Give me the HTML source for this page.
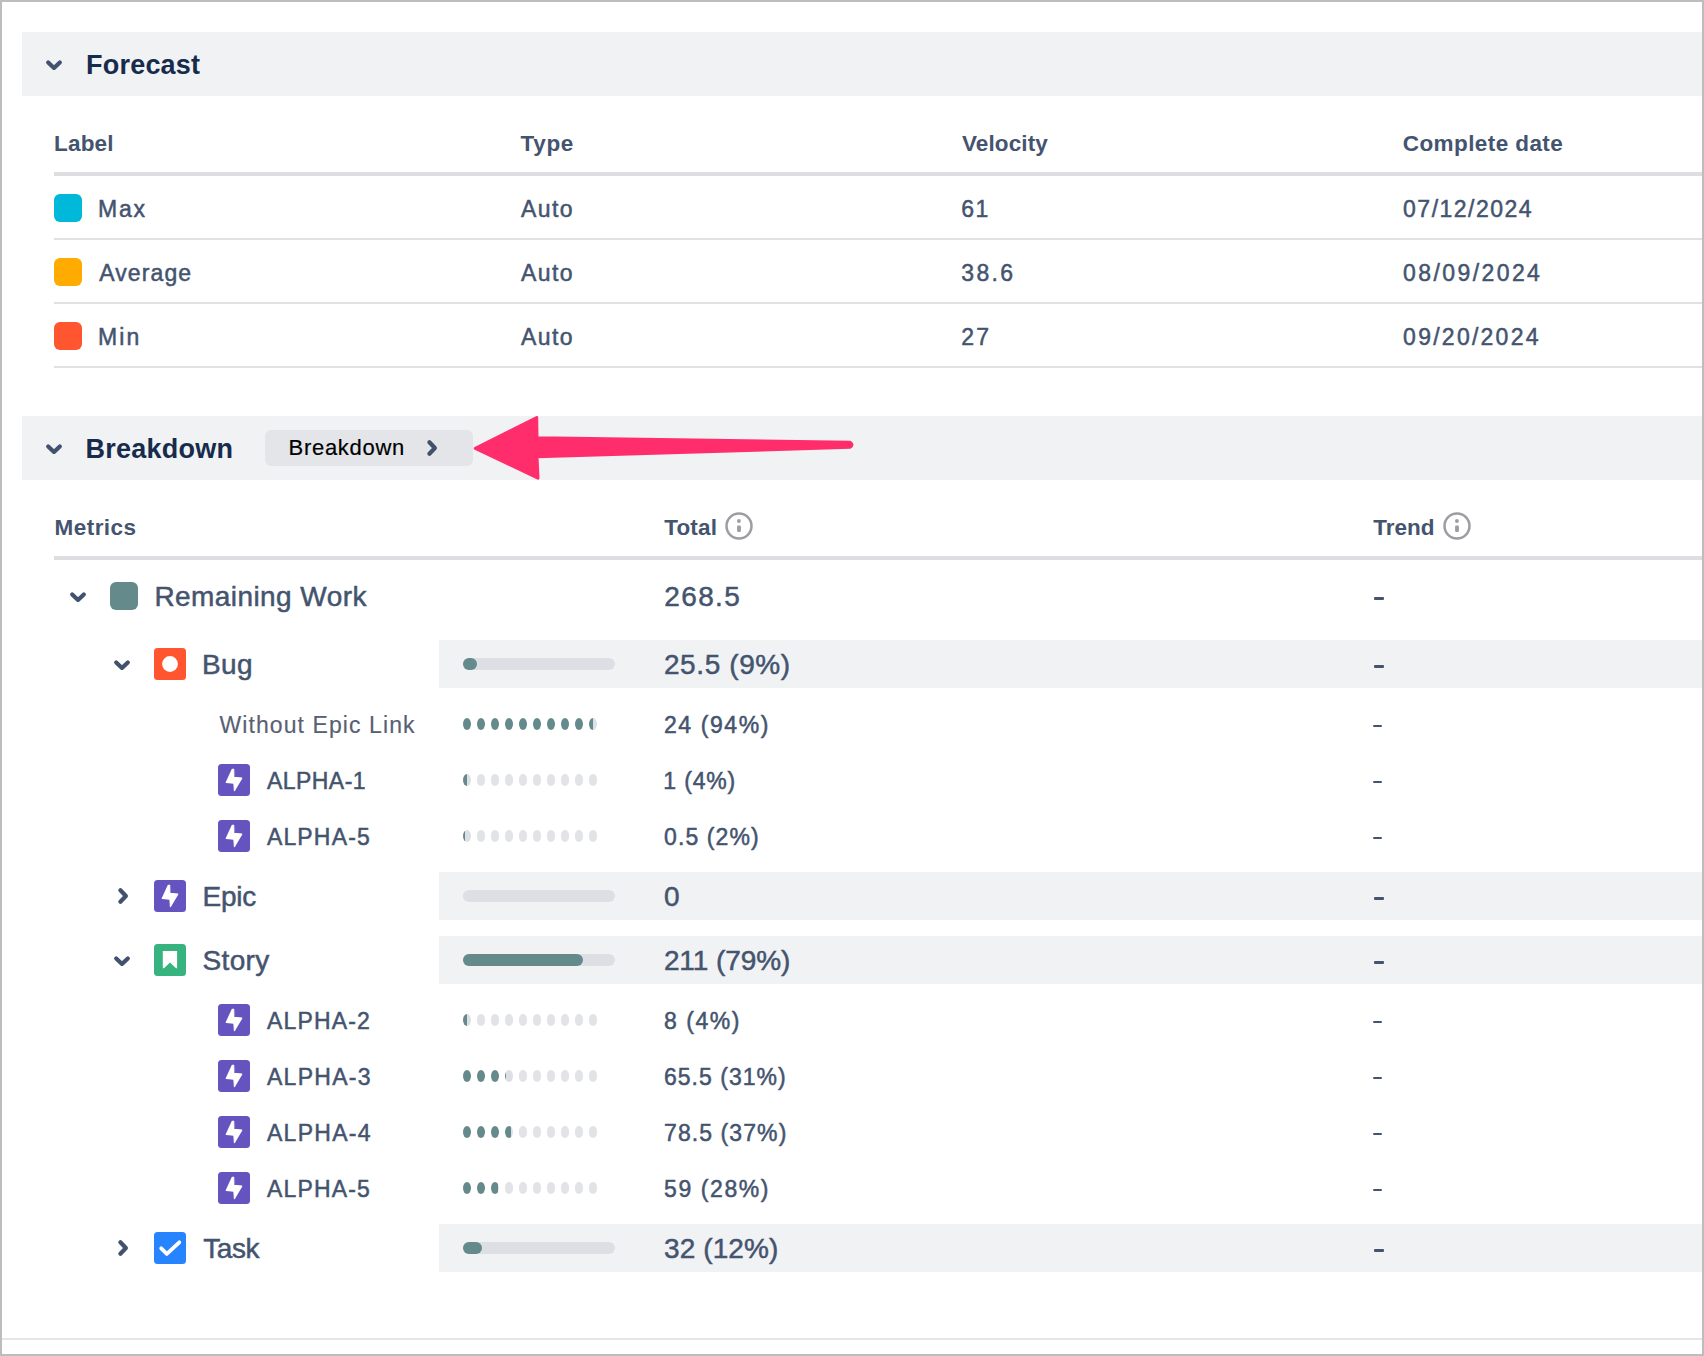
<!DOCTYPE html>
<html><head><meta charset="utf-8"><style>
html,body{margin:0;padding:0;}
body{width:1704px;height:1356px;position:relative;overflow:hidden;background:#fff;font-family:"Liberation Sans",sans-serif;}
#frame{position:absolute;left:0;top:0;width:1700px;height:1352px;border:2px solid #bdbdbd;}
div{position:absolute;}
.t{white-space:nowrap;}
</style></head><body>
<div style="left:22px;top:32px;width:1682px;height:64px;background:#f1f2f4;border-radius:0px;"></div>
<svg style="position:absolute;left:44px;top:57px" width="20" height="16" viewBox="0 0 20 16"><polyline points="4.2,5.4 10,10.9 15.8,5.4" fill="none" stroke="#42526e" stroke-width="4.2" stroke-linecap="round" stroke-linejoin="round"/></svg>
<div style="left:54px;top:172px;width:1650px;height:4px;background:#dcdee2;border-radius:0px;"></div>
<div style="left:54px;top:194px;width:28px;height:28px;background:#00b8d9;border-radius:6px;"></div>
<div style="left:54px;top:238px;width:1650px;height:2px;background:#dfe1e5;border-radius:0px;"></div>
<div style="left:54px;top:258px;width:28px;height:28px;background:#ffab00;border-radius:6px;"></div>
<div style="left:54px;top:302px;width:1650px;height:2px;background:#dfe1e5;border-radius:0px;"></div>
<div style="left:54px;top:322px;width:28px;height:28px;background:#ff5630;border-radius:6px;"></div>
<div style="left:54px;top:366px;width:1650px;height:2px;background:#dfe1e5;border-radius:0px;"></div>
<div style="left:22px;top:416px;width:1682px;height:64px;background:#f1f2f4;border-radius:0px;"></div>
<svg style="position:absolute;left:44px;top:441px" width="20" height="16" viewBox="0 0 20 16"><polyline points="4.2,5.4 10,10.9 15.8,5.4" fill="none" stroke="#42526e" stroke-width="4.2" stroke-linecap="round" stroke-linejoin="round"/></svg>
<div style="left:265px;top:430px;width:208px;height:36px;background:#e3e5e9;border-radius:6px;"></div>
<svg style="position:absolute;left:424px;top:438px" width="16" height="20" viewBox="0 0 16 20"><polyline points="5.4,4.2 10.9,10 5.4,15.8" fill="none" stroke="#42526e" stroke-width="4.2" stroke-linecap="round" stroke-linejoin="round"/></svg>
<svg style="position:absolute;left:462px;top:400px" width="420" height="100" viewBox="0 0 420 100"><path d="M13.3 48.3 L76 78.1 L75 56.8 L388 47.3 Q392 44.75 388 42.2 L75 37.8 L74.7 17.5 Z" fill="#ff2d6b" stroke="#ff2d6b" stroke-width="3" stroke-linejoin="round"/></svg>
<svg style="position:absolute;left:724px;top:511px" width="30" height="30" viewBox="0 0 30 30"><circle cx="15" cy="15" r="12.5" fill="none" stroke="#9c9da3" stroke-width="2.5"/><circle cx="14.9" cy="10" r="1.9" fill="#9c9da3"/><rect x="13.1" y="14.5" width="3.8" height="6.4" rx="1.2" fill="#9c9da3"/></svg>
<svg style="position:absolute;left:1442px;top:511px" width="30" height="30" viewBox="0 0 30 30"><circle cx="15" cy="15" r="12.5" fill="none" stroke="#9c9da3" stroke-width="2.5"/><circle cx="14.9" cy="10" r="1.9" fill="#9c9da3"/><rect x="13.1" y="14.5" width="3.8" height="6.4" rx="1.2" fill="#9c9da3"/></svg>
<div style="left:54px;top:556px;width:1650px;height:4px;background:#dcdee2;border-radius:0px;"></div>
<svg style="position:absolute;left:68px;top:589px" width="20" height="16" viewBox="0 0 20 16"><polyline points="4.2,5.4 10,10.9 15.8,5.4" fill="none" stroke="#42526e" stroke-width="4.2" stroke-linecap="round" stroke-linejoin="round"/></svg>
<div style="left:110px;top:582px;width:28px;height:28px;background:#648a8c;border-radius:6px;"></div>
<div style="left:1374px;top:597px;width:10px;height:3px;background:#44546f;border-radius:1px;"></div>
<div style="left:439px;top:640px;width:1265px;height:48px;background:#f1f2f4;border-radius:0px;"></div>
<svg style="position:absolute;left:112px;top:657px" width="20" height="16" viewBox="0 0 20 16"><polyline points="4.2,5.4 10,10.9 15.8,5.4" fill="none" stroke="#42526e" stroke-width="4.2" stroke-linecap="round" stroke-linejoin="round"/></svg>
<svg style="position:absolute;left:154px;top:648px" width="32" height="32" viewBox="0 0 32 32"><rect width="32" height="32" rx="3.5" fill="#ff5630"/><circle cx="16" cy="16" r="7.9" fill="#fff"/></svg>
<div style="left:463px;top:658px;width:152px;height:12px;background:#dcdfe4;border-radius:6px;"></div>
<div style="left:463px;top:658px;width:14px;height:12px;background:#648a8c;border-radius:6px;"></div>
<div style="left:1374px;top:665px;width:10px;height:3px;background:#44546f;border-radius:1px;"></div>
<div style="left:463px;top:718px;width:8px;height:12px;background:#648a8c;border-radius:4px/6px;"></div>
<div style="left:477px;top:718px;width:8px;height:12px;background:#648a8c;border-radius:4px/6px;"></div>
<div style="left:491px;top:718px;width:8px;height:12px;background:#648a8c;border-radius:4px/6px;"></div>
<div style="left:505px;top:718px;width:8px;height:12px;background:#648a8c;border-radius:4px/6px;"></div>
<div style="left:519px;top:718px;width:8px;height:12px;background:#648a8c;border-radius:4px/6px;"></div>
<div style="left:533px;top:718px;width:8px;height:12px;background:#648a8c;border-radius:4px/6px;"></div>
<div style="left:547px;top:718px;width:8px;height:12px;background:#648a8c;border-radius:4px/6px;"></div>
<div style="left:561px;top:718px;width:8px;height:12px;background:#648a8c;border-radius:4px/6px;"></div>
<div style="left:575px;top:718px;width:8px;height:12px;background:#648a8c;border-radius:4px/6px;"></div>
<div style="left:589px;top:718px;width:8px;height:12px;border-radius:4px/6px;background:linear-gradient(90deg,#648a8c 50%,#dcdfe4 50%)"></div>
<div style="left:1373px;top:725px;width:9px;height:2px;background:#44546f;border-radius:1px;"></div>
<svg style="position:absolute;left:218px;top:764px" width="32" height="32" viewBox="0 0 32 32"><rect width="32" height="32" rx="3.5" fill="#6554c0"/><path d="M14.3 5.2 L15.7 5.2 L15.9 13.4 L23.8 14.1 L16.4 26.6 L15.9 19.2 L8.2 18.4 Z" fill="#fff" stroke="#fff" stroke-width="1.1" stroke-linejoin="round"/></svg>
<div style="left:463px;top:774px;width:8px;height:12px;border-radius:4px/6px;background:linear-gradient(90deg,#648a8c 50%,#dcdfe4 50%)"></div>
<div style="left:477px;top:774px;width:8px;height:12px;background:#e1e3e6;border-radius:4px/5px;"></div>
<div style="left:491px;top:774px;width:8px;height:12px;background:#e1e3e6;border-radius:4px/5px;"></div>
<div style="left:505px;top:774px;width:8px;height:12px;background:#e1e3e6;border-radius:4px/5px;"></div>
<div style="left:519px;top:774px;width:8px;height:12px;background:#e1e3e6;border-radius:4px/5px;"></div>
<div style="left:533px;top:774px;width:8px;height:12px;background:#e1e3e6;border-radius:4px/5px;"></div>
<div style="left:547px;top:774px;width:8px;height:12px;background:#e1e3e6;border-radius:4px/5px;"></div>
<div style="left:561px;top:774px;width:8px;height:12px;background:#e1e3e6;border-radius:4px/5px;"></div>
<div style="left:575px;top:774px;width:8px;height:12px;background:#e1e3e6;border-radius:4px/5px;"></div>
<div style="left:589px;top:774px;width:8px;height:12px;background:#e1e3e6;border-radius:4px/5px;"></div>
<div style="left:1373px;top:781px;width:9px;height:2px;background:#44546f;border-radius:1px;"></div>
<svg style="position:absolute;left:218px;top:820px" width="32" height="32" viewBox="0 0 32 32"><rect width="32" height="32" rx="3.5" fill="#6554c0"/><path d="M14.3 5.2 L15.7 5.2 L15.9 13.4 L23.8 14.1 L16.4 26.6 L15.9 19.2 L8.2 18.4 Z" fill="#fff" stroke="#fff" stroke-width="1.1" stroke-linejoin="round"/></svg>
<div style="left:463px;top:830px;width:8px;height:12px;border-radius:4px/6px;background:linear-gradient(90deg,#648a8c 25%,#dcdfe4 25%)"></div>
<div style="left:477px;top:830px;width:8px;height:12px;background:#e1e3e6;border-radius:4px/5px;"></div>
<div style="left:491px;top:830px;width:8px;height:12px;background:#e1e3e6;border-radius:4px/5px;"></div>
<div style="left:505px;top:830px;width:8px;height:12px;background:#e1e3e6;border-radius:4px/5px;"></div>
<div style="left:519px;top:830px;width:8px;height:12px;background:#e1e3e6;border-radius:4px/5px;"></div>
<div style="left:533px;top:830px;width:8px;height:12px;background:#e1e3e6;border-radius:4px/5px;"></div>
<div style="left:547px;top:830px;width:8px;height:12px;background:#e1e3e6;border-radius:4px/5px;"></div>
<div style="left:561px;top:830px;width:8px;height:12px;background:#e1e3e6;border-radius:4px/5px;"></div>
<div style="left:575px;top:830px;width:8px;height:12px;background:#e1e3e6;border-radius:4px/5px;"></div>
<div style="left:589px;top:830px;width:8px;height:12px;background:#e1e3e6;border-radius:4px/5px;"></div>
<div style="left:1373px;top:837px;width:9px;height:2px;background:#44546f;border-radius:1px;"></div>
<div style="left:439px;top:872px;width:1265px;height:48px;background:#f1f2f4;border-radius:0px;"></div>
<svg style="position:absolute;left:115px;top:886px" width="16" height="20" viewBox="0 0 16 20"><polyline points="5.4,4.2 10.9,10 5.4,15.8" fill="none" stroke="#42526e" stroke-width="4.2" stroke-linecap="round" stroke-linejoin="round"/></svg>
<svg style="position:absolute;left:154px;top:880px" width="32" height="32" viewBox="0 0 32 32"><rect width="32" height="32" rx="3.5" fill="#6554c0"/><path d="M14.3 5.2 L15.7 5.2 L15.9 13.4 L23.8 14.1 L16.4 26.6 L15.9 19.2 L8.2 18.4 Z" fill="#fff" stroke="#fff" stroke-width="1.1" stroke-linejoin="round"/></svg>
<div style="left:463px;top:890px;width:152px;height:12px;background:#dcdfe4;border-radius:6px;"></div>
<div style="left:1374px;top:897px;width:10px;height:3px;background:#44546f;border-radius:1px;"></div>
<div style="left:439px;top:936px;width:1265px;height:48px;background:#f1f2f4;border-radius:0px;"></div>
<svg style="position:absolute;left:112px;top:953px" width="20" height="16" viewBox="0 0 20 16"><polyline points="4.2,5.4 10,10.9 15.8,5.4" fill="none" stroke="#42526e" stroke-width="4.2" stroke-linecap="round" stroke-linejoin="round"/></svg>
<svg style="position:absolute;left:154px;top:944px" width="32" height="32" viewBox="0 0 32 32"><rect width="32" height="32" rx="3.5" fill="#36b37e"/><path d="M8.8 7 H23.1 V24.2 H22 L16 18.5 L10 24.2 H8.8 Z" fill="#fff"/></svg>
<div style="left:463px;top:954px;width:152px;height:12px;background:#dcdfe4;border-radius:6px;"></div>
<div style="left:463px;top:954px;width:120px;height:12px;background:#648a8c;border-radius:6px;"></div>
<div style="left:1374px;top:961px;width:10px;height:3px;background:#44546f;border-radius:1px;"></div>
<svg style="position:absolute;left:218px;top:1004px" width="32" height="32" viewBox="0 0 32 32"><rect width="32" height="32" rx="3.5" fill="#6554c0"/><path d="M14.3 5.2 L15.7 5.2 L15.9 13.4 L23.8 14.1 L16.4 26.6 L15.9 19.2 L8.2 18.4 Z" fill="#fff" stroke="#fff" stroke-width="1.1" stroke-linejoin="round"/></svg>
<div style="left:463px;top:1014px;width:8px;height:12px;border-radius:4px/6px;background:linear-gradient(90deg,#648a8c 50%,#dcdfe4 50%)"></div>
<div style="left:477px;top:1014px;width:8px;height:12px;background:#e1e3e6;border-radius:4px/5px;"></div>
<div style="left:491px;top:1014px;width:8px;height:12px;background:#e1e3e6;border-radius:4px/5px;"></div>
<div style="left:505px;top:1014px;width:8px;height:12px;background:#e1e3e6;border-radius:4px/5px;"></div>
<div style="left:519px;top:1014px;width:8px;height:12px;background:#e1e3e6;border-radius:4px/5px;"></div>
<div style="left:533px;top:1014px;width:8px;height:12px;background:#e1e3e6;border-radius:4px/5px;"></div>
<div style="left:547px;top:1014px;width:8px;height:12px;background:#e1e3e6;border-radius:4px/5px;"></div>
<div style="left:561px;top:1014px;width:8px;height:12px;background:#e1e3e6;border-radius:4px/5px;"></div>
<div style="left:575px;top:1014px;width:8px;height:12px;background:#e1e3e6;border-radius:4px/5px;"></div>
<div style="left:589px;top:1014px;width:8px;height:12px;background:#e1e3e6;border-radius:4px/5px;"></div>
<div style="left:1373px;top:1021px;width:9px;height:2px;background:#44546f;border-radius:1px;"></div>
<svg style="position:absolute;left:218px;top:1060px" width="32" height="32" viewBox="0 0 32 32"><rect width="32" height="32" rx="3.5" fill="#6554c0"/><path d="M14.3 5.2 L15.7 5.2 L15.9 13.4 L23.8 14.1 L16.4 26.6 L15.9 19.2 L8.2 18.4 Z" fill="#fff" stroke="#fff" stroke-width="1.1" stroke-linejoin="round"/></svg>
<div style="left:463px;top:1070px;width:8px;height:12px;background:#648a8c;border-radius:4px/6px;"></div>
<div style="left:477px;top:1070px;width:8px;height:12px;background:#648a8c;border-radius:4px/6px;"></div>
<div style="left:491px;top:1070px;width:8px;height:12px;background:#648a8c;border-radius:4px/6px;"></div>
<div style="left:505px;top:1070px;width:8px;height:12px;border-radius:4px/6px;background:linear-gradient(90deg,#648a8c 12%,#dcdfe4 12%)"></div>
<div style="left:519px;top:1070px;width:8px;height:12px;background:#e1e3e6;border-radius:4px/5px;"></div>
<div style="left:533px;top:1070px;width:8px;height:12px;background:#e1e3e6;border-radius:4px/5px;"></div>
<div style="left:547px;top:1070px;width:8px;height:12px;background:#e1e3e6;border-radius:4px/5px;"></div>
<div style="left:561px;top:1070px;width:8px;height:12px;background:#e1e3e6;border-radius:4px/5px;"></div>
<div style="left:575px;top:1070px;width:8px;height:12px;background:#e1e3e6;border-radius:4px/5px;"></div>
<div style="left:589px;top:1070px;width:8px;height:12px;background:#e1e3e6;border-radius:4px/5px;"></div>
<div style="left:1373px;top:1077px;width:9px;height:2px;background:#44546f;border-radius:1px;"></div>
<svg style="position:absolute;left:218px;top:1116px" width="32" height="32" viewBox="0 0 32 32"><rect width="32" height="32" rx="3.5" fill="#6554c0"/><path d="M14.3 5.2 L15.7 5.2 L15.9 13.4 L23.8 14.1 L16.4 26.6 L15.9 19.2 L8.2 18.4 Z" fill="#fff" stroke="#fff" stroke-width="1.1" stroke-linejoin="round"/></svg>
<div style="left:463px;top:1126px;width:8px;height:12px;background:#648a8c;border-radius:4px/6px;"></div>
<div style="left:477px;top:1126px;width:8px;height:12px;background:#648a8c;border-radius:4px/6px;"></div>
<div style="left:491px;top:1126px;width:8px;height:12px;background:#648a8c;border-radius:4px/6px;"></div>
<div style="left:505px;top:1126px;width:8px;height:12px;border-radius:4px/6px;background:linear-gradient(90deg,#648a8c 80%,#dcdfe4 80%)"></div>
<div style="left:519px;top:1126px;width:8px;height:12px;background:#e1e3e6;border-radius:4px/5px;"></div>
<div style="left:533px;top:1126px;width:8px;height:12px;background:#e1e3e6;border-radius:4px/5px;"></div>
<div style="left:547px;top:1126px;width:8px;height:12px;background:#e1e3e6;border-radius:4px/5px;"></div>
<div style="left:561px;top:1126px;width:8px;height:12px;background:#e1e3e6;border-radius:4px/5px;"></div>
<div style="left:575px;top:1126px;width:8px;height:12px;background:#e1e3e6;border-radius:4px/5px;"></div>
<div style="left:589px;top:1126px;width:8px;height:12px;background:#e1e3e6;border-radius:4px/5px;"></div>
<div style="left:1373px;top:1133px;width:9px;height:2px;background:#44546f;border-radius:1px;"></div>
<svg style="position:absolute;left:218px;top:1172px" width="32" height="32" viewBox="0 0 32 32"><rect width="32" height="32" rx="3.5" fill="#6554c0"/><path d="M14.3 5.2 L15.7 5.2 L15.9 13.4 L23.8 14.1 L16.4 26.6 L15.9 19.2 L8.2 18.4 Z" fill="#fff" stroke="#fff" stroke-width="1.1" stroke-linejoin="round"/></svg>
<div style="left:463px;top:1182px;width:8px;height:12px;background:#648a8c;border-radius:4px/6px;"></div>
<div style="left:477px;top:1182px;width:8px;height:12px;background:#648a8c;border-radius:4px/6px;"></div>
<div style="left:491px;top:1182px;width:8px;height:12px;border-radius:4px/6px;background:linear-gradient(90deg,#648a8c 85%,#dcdfe4 85%)"></div>
<div style="left:505px;top:1182px;width:8px;height:12px;background:#e1e3e6;border-radius:4px/5px;"></div>
<div style="left:519px;top:1182px;width:8px;height:12px;background:#e1e3e6;border-radius:4px/5px;"></div>
<div style="left:533px;top:1182px;width:8px;height:12px;background:#e1e3e6;border-radius:4px/5px;"></div>
<div style="left:547px;top:1182px;width:8px;height:12px;background:#e1e3e6;border-radius:4px/5px;"></div>
<div style="left:561px;top:1182px;width:8px;height:12px;background:#e1e3e6;border-radius:4px/5px;"></div>
<div style="left:575px;top:1182px;width:8px;height:12px;background:#e1e3e6;border-radius:4px/5px;"></div>
<div style="left:589px;top:1182px;width:8px;height:12px;background:#e1e3e6;border-radius:4px/5px;"></div>
<div style="left:1373px;top:1189px;width:9px;height:2px;background:#44546f;border-radius:1px;"></div>
<div style="left:439px;top:1224px;width:1265px;height:48px;background:#f1f2f4;border-radius:0px;"></div>
<svg style="position:absolute;left:115px;top:1238px" width="16" height="20" viewBox="0 0 16 20"><polyline points="5.4,4.2 10.9,10 5.4,15.8" fill="none" stroke="#42526e" stroke-width="4.2" stroke-linecap="round" stroke-linejoin="round"/></svg>
<svg style="position:absolute;left:154px;top:1232px" width="32" height="32" viewBox="0 0 32 32"><rect width="32" height="32" rx="3.5" fill="#2684ff"/><polyline points="7.2,16.3 12.8,21.9 25.3,10.3" fill="none" stroke="#fff" stroke-width="3.8" stroke-linecap="round" stroke-linejoin="round"/></svg>
<div style="left:463px;top:1242px;width:152px;height:12px;background:#dcdfe4;border-radius:6px;"></div>
<div style="left:463px;top:1242px;width:19px;height:12px;background:#648a8c;border-radius:6px;"></div>
<div style="left:1374px;top:1249px;width:10px;height:3px;background:#44546f;border-radius:1px;"></div>
<div style="left:2px;top:1338px;width:1700px;height:2px;background:#e4e6ea;border-radius:0px;"></div>
<div class="t" style="left:86.10px;top:52px;font-size:27px;line-height:27px;font-weight:700;color:#172b4d;letter-spacing:0.200px;">Forecast</div>
<div class="t" style="left:54.10px;top:133px;font-size:22.5px;line-height:22.5px;font-weight:700;color:#44546f;letter-spacing:0.175px;">Label</div>
<div class="t" style="left:520.40px;top:133px;font-size:22.5px;line-height:22.5px;font-weight:700;color:#44546f;letter-spacing:0.700px;">Type</div>
<div class="t" style="left:962.00px;top:133px;font-size:22.5px;line-height:22.5px;font-weight:700;color:#44546f;letter-spacing:0.100px;">Velocity</div>
<div class="t" style="left:1402.80px;top:133px;font-size:22.5px;line-height:22.5px;font-weight:700;color:#44546f;letter-spacing:0.408px;">Complete date</div>
<div class="t" style="left:98.00px;top:198px;font-size:23px;line-height:23px;color:#44546f;letter-spacing:1.750px;-webkit-text-stroke:0.5px #44546f;">Max</div>
<div class="t" style="left:521.10px;top:198px;font-size:23px;line-height:23px;color:#44546f;letter-spacing:1.400px;-webkit-text-stroke:0.5px #44546f;">Auto</div>
<div class="t" style="left:961.30px;top:198px;font-size:23px;line-height:23px;color:#44546f;letter-spacing:1.400px;-webkit-text-stroke:0.5px #44546f;">61</div>
<div class="t" style="left:1403.10px;top:198px;font-size:23px;line-height:23px;color:#44546f;letter-spacing:1.478px;-webkit-text-stroke:0.5px #44546f;">07/12/2024</div>
<div class="t" style="left:99.20px;top:262px;font-size:23px;line-height:23px;color:#44546f;letter-spacing:1.108px;-webkit-text-stroke:0.5px #44546f;">Average</div>
<div class="t" style="left:521.10px;top:262px;font-size:23px;line-height:23px;color:#44546f;letter-spacing:1.400px;-webkit-text-stroke:0.5px #44546f;">Auto</div>
<div class="t" style="left:961.30px;top:262px;font-size:23px;line-height:23px;color:#44546f;letter-spacing:2.333px;-webkit-text-stroke:0.5px #44546f;">38.6</div>
<div class="t" style="left:1403.10px;top:262px;font-size:23px;line-height:23px;color:#44546f;letter-spacing:2.411px;-webkit-text-stroke:0.5px #44546f;">08/09/2024</div>
<div class="t" style="left:98.00px;top:326px;font-size:23px;line-height:23px;color:#44546f;letter-spacing:2.100px;-webkit-text-stroke:0.5px #44546f;">Min</div>
<div class="t" style="left:521.10px;top:326px;font-size:23px;line-height:23px;color:#44546f;letter-spacing:1.400px;-webkit-text-stroke:0.5px #44546f;">Auto</div>
<div class="t" style="left:961.30px;top:326px;font-size:23px;line-height:23px;color:#44546f;letter-spacing:2.100px;-webkit-text-stroke:0.5px #44546f;">27</div>
<div class="t" style="left:1403.10px;top:326px;font-size:23px;line-height:23px;color:#44546f;letter-spacing:2.256px;-webkit-text-stroke:0.5px #44546f;">09/20/2024</div>
<div class="t" style="left:85.40px;top:436px;font-size:27px;line-height:27px;font-weight:700;color:#172b4d;letter-spacing:0.262px;">Breakdown</div>
<div class="t" style="left:288.60px;top:437px;font-size:22px;line-height:22px;color:#000;letter-spacing:0.700px;-webkit-text-stroke:0.2px #000;">Breakdown</div>
<div class="t" style="left:54.50px;top:517px;font-size:22.5px;line-height:22.5px;font-weight:700;color:#44546f;letter-spacing:0.467px;">Metrics</div>
<div class="t" style="left:664.20px;top:517px;font-size:22.5px;line-height:22.5px;font-weight:700;color:#44546f;letter-spacing:0.175px;">Total</div>
<div class="t" style="left:1373.20px;top:517px;font-size:22.5px;line-height:22.5px;font-weight:700;color:#44546f;letter-spacing:-0.000px;">Trend</div>
<div class="t" style="left:154.40px;top:583px;font-size:28px;line-height:28px;color:#44546f;letter-spacing:0.431px;-webkit-text-stroke:0.5px #44546f;">Remaining Work</div>
<div class="t" style="left:664.20px;top:583px;font-size:28px;line-height:28px;color:#44546f;letter-spacing:1.400px;-webkit-text-stroke:0.5px #44546f;">268.5</div>
<div class="t" style="left:202.10px;top:651px;font-size:28px;line-height:28px;color:#44546f;letter-spacing:0.350px;-webkit-text-stroke:0.5px #44546f;">Bug</div>
<div class="t" style="left:663.90px;top:651px;font-size:28px;line-height:28px;color:#44546f;letter-spacing:0.612px;-webkit-text-stroke:0.5px #44546f;">25.5 (9%)</div>
<div class="t" style="left:219.40px;top:714px;font-size:23px;line-height:23px;color:#586073;letter-spacing:1.094px;-webkit-text-stroke:0.15px #586073;">Without Epic Link</div>
<div class="t" style="left:663.90px;top:714px;font-size:23px;line-height:23px;color:#44546f;letter-spacing:1.600px;-webkit-text-stroke:0.5px #44546f;">24 (94%)</div>
<div class="t" style="left:266.90px;top:770px;font-size:23px;line-height:23px;color:#44546f;letter-spacing:0.467px;-webkit-text-stroke:0.5px #44546f;">ALPHA-1</div>
<div class="t" style="left:663.30px;top:770px;font-size:23px;line-height:23px;color:#44546f;letter-spacing:0.840px;-webkit-text-stroke:0.5px #44546f;">1 (4%)</div>
<div class="t" style="left:266.90px;top:826px;font-size:23px;line-height:23px;color:#44546f;letter-spacing:1.167px;-webkit-text-stroke:0.5px #44546f;">ALPHA-5</div>
<div class="t" style="left:664.00px;top:826px;font-size:23px;line-height:23px;color:#44546f;letter-spacing:1.100px;-webkit-text-stroke:0.5px #44546f;">0.5 (2%)</div>
<div class="t" style="left:202.50px;top:883px;font-size:28px;line-height:28px;color:#44546f;letter-spacing:-0.233px;-webkit-text-stroke:0.5px #44546f;">Epic</div>
<div class="t" style="left:663.90px;top:883px;font-size:28px;line-height:28px;color:#44546f;letter-spacing:0.000px;-webkit-text-stroke:0.5px #44546f;">0</div>
<div class="t" style="left:202.50px;top:947px;font-size:28px;line-height:28px;color:#44546f;letter-spacing:0.350px;-webkit-text-stroke:0.5px #44546f;">Story</div>
<div class="t" style="left:663.90px;top:947px;font-size:28px;line-height:28px;color:#44546f;letter-spacing:-0.088px;-webkit-text-stroke:0.5px #44546f;">211 (79%)</div>
<div class="t" style="left:267.00px;top:1010px;font-size:23px;line-height:23px;color:#44546f;letter-spacing:1.167px;-webkit-text-stroke:0.5px #44546f;">ALPHA-2</div>
<div class="t" style="left:664.00px;top:1010px;font-size:23px;line-height:23px;color:#44546f;letter-spacing:1.540px;-webkit-text-stroke:0.5px #44546f;">8 (4%)</div>
<div class="t" style="left:267.00px;top:1066px;font-size:23px;line-height:23px;color:#44546f;letter-spacing:1.283px;-webkit-text-stroke:0.5px #44546f;">ALPHA-3</div>
<div class="t" style="left:664.00px;top:1066px;font-size:23px;line-height:23px;color:#44546f;letter-spacing:1.011px;-webkit-text-stroke:0.5px #44546f;">65.5 (31%)</div>
<div class="t" style="left:267.00px;top:1122px;font-size:23px;line-height:23px;color:#44546f;letter-spacing:1.283px;-webkit-text-stroke:0.5px #44546f;">ALPHA-4</div>
<div class="t" style="left:664.00px;top:1122px;font-size:23px;line-height:23px;color:#44546f;letter-spacing:1.089px;-webkit-text-stroke:0.5px #44546f;">78.5 (37%)</div>
<div class="t" style="left:267.00px;top:1178px;font-size:23px;line-height:23px;color:#44546f;letter-spacing:1.167px;-webkit-text-stroke:0.5px #44546f;">ALPHA-5</div>
<div class="t" style="left:664.00px;top:1178px;font-size:23px;line-height:23px;color:#44546f;letter-spacing:1.600px;-webkit-text-stroke:0.5px #44546f;">59 (28%)</div>
<div class="t" style="left:203.30px;top:1235px;font-size:28px;line-height:28px;color:#44546f;letter-spacing:-0.467px;-webkit-text-stroke:0.5px #44546f;">Task</div>
<div class="t" style="left:664.00px;top:1235px;font-size:28px;line-height:28px;color:#44546f;letter-spacing:0.100px;-webkit-text-stroke:0.5px #44546f;">32 (12%)</div>
<div id="frame"></div>
</body></html>
